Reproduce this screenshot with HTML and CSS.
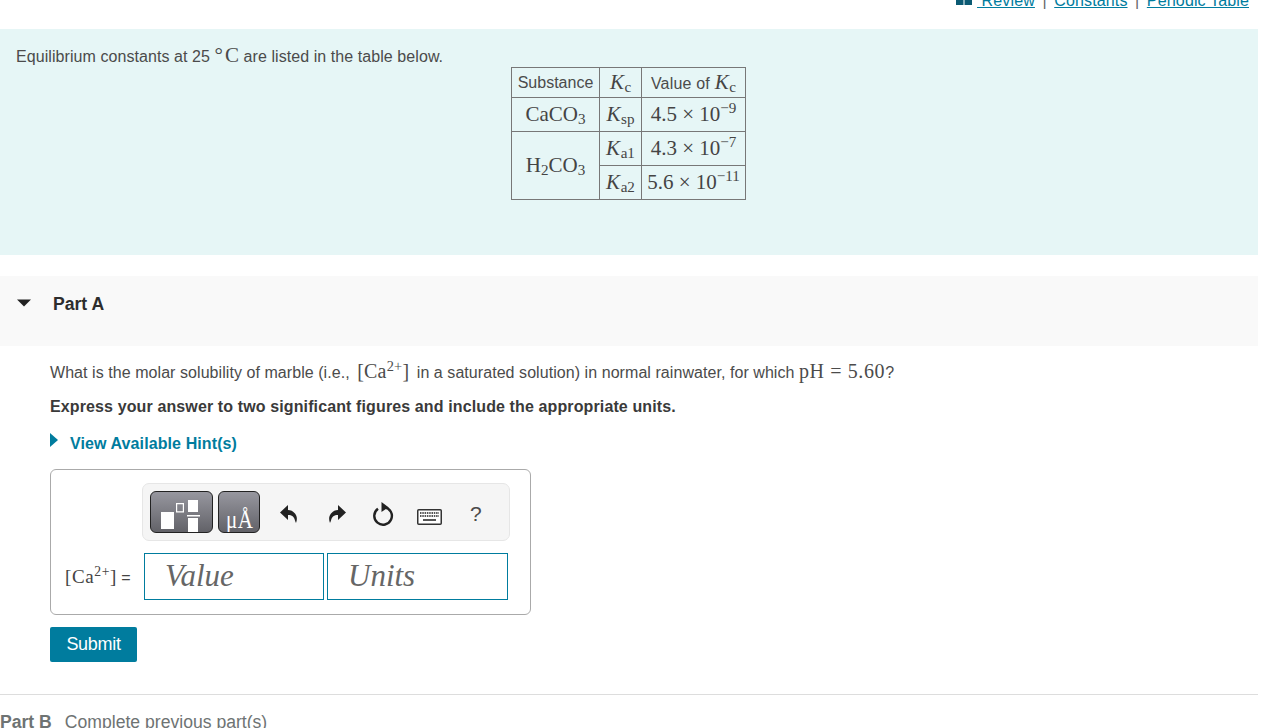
FILE: index.html
```html
<!DOCTYPE html>
<html lang="en">
<head>
<meta charset="utf-8">
<title>Part A</title>
<link rel="stylesheet" href="styles.css">
</head>
<body>
<main class="page">
  <nav class="toplinks">
    <svg class="book" width="16" height="7" viewBox="0 0 16 7"><path d="M0 0h7.500v5H0zM8.500 0H16v5H8.500z" fill="#0b5a73"/></svg>
    <a href="#" class="link">&nbsp;Review</a><span class="sep">|</span><a href="#" class="link">Constants</a><span class="sep">|</span><a href="#" class="link">Periodic Table</a>
  </nav>

  <section class="intro">
    <p class="intro-text">Equilibrium constants at 25 <span class="m"><span class="deg">°</span>C</span> are listed in the table below.</p>
    <table class="constants">
      <tr class="r1"><th class="c1">Substance</th><th class="c2"><span class="m"><i>K</i><sub>c</sub></span></th><th class="c3">Value of <span class="m"><i>K</i><sub>c</sub></span></th></tr>
      <tr class="r2"><td class="m">CaCO<sub>3</sub></td><td class="m"><i>K</i><sub>sp</sub></td><td class="m">4.5 × 10<sup>−9</sup></td></tr>
      <tr class="r2"><td class="m" rowspan="2">H<sub>2</sub>CO<sub>3</sub></td><td class="m"><i>K</i><sub>a1</sub></td><td class="m">4.3 × 10<sup>−7</sup></td></tr>
      <tr class="r2"><td class="m"><i>K</i><sub>a2</sub></td><td class="m">5.6 × 10<sup>−11</sup></td></tr>
    </table>
  </section>

  <header class="part-head">
    <svg class="caret" width="14" height="8" viewBox="0 0 14 8"><path d="M0 .5h14L7 7.500z" fill="#222"/></svg>
    <h2 class="part-title">Part A</h2>
  </header>

  <section class="part-body">
    <p class="question">What is the molar solubility of marble (i.e., <span class="m q-ion">[Ca<sup>2+</sup>]</span> in a saturated solution) in normal rainwater, for which <span class="m q-ph">pH = 5.60</span>?</p>
    <p class="instruction">Express your answer to two significant figures and include the appropriate units.</p>
    <a href="#" class="hint"><svg class="hint-caret" width="8" height="14" viewBox="0 0 8 14"><path d="M0 0l8 7-8 7z" fill="#007c9e"/></svg>View Available Hint(s)</a>

    <div class="answer">
      <div class="toolbar">
        <button class="tool wide" aria-label="Templates">
          <svg width="63" height="42" viewBox="0 0 63 42"><path d="M11 21h13v17H11z" fill="#fff"/><path d="M26.600 12.600h6.800v8.200h-6.800z" fill="none" stroke="#fff" stroke-width="1.200"/><path d="M38 9h10v12H38zM38 27h10v14H38z" fill="#fff"/><path d="M37 24h13v1.500H37z" fill="#fff"/></svg>
        </button>
        <button class="tool narrow" aria-label="Units">
          <span class="mu">μÅ</span>
        </button>
        <svg class="action a-undo" width="20" height="22" viewBox="0 0 20 22"><path d="M9 2L1 9.500l8 7.500v-5c4 0 6 1.500 7 5.500.3 1 .8 2 1 2.500 1.500-4 1-7-1-9.500C14 8 11.500 7 9 7z" fill="#222"/></svg>
        <svg class="action a-redo" width="20" height="22" viewBox="0 0 20 22"><path d="M11 2l8 7.500-8 7.500v-5c-4 0-6 1.500-7 5.500-.3 1-.8 2-1 2.500-1.500-4-1-7 1-9.500C6 8 8.500 7 11 7z" fill="#222"/></svg>
        <svg class="action a-reset" width="22" height="26" viewBox="0 0 22 26"><path d="M12.500 6.200A8.800 8.800 0 1 1 6 7.700" fill="none" stroke="#222" stroke-width="2.400"/><path d="M9.500 1l7 5.200-7 4.800z" fill="#222"/></svg>
        <svg class="action a-keys" width="25" height="16" viewBox="0 0 25 16"><rect x=".75" y=".75" width="23.500" height="14.500" rx="1" fill="#fff" stroke="#333" stroke-width="1.500"/><path d="M3 4h19M3 7h19" stroke="#555" stroke-width="2" stroke-dasharray="1.500 .8"/><path d="M6 11h13" stroke="#555" stroke-width="2"/></svg>
        <span class="help">?</span>
      </div>
      <div class="answer-row">
        <span class="label"><span class="m label-m">[Ca<sup>2+</sup>]</span> =</span>
        <input class="field value" type="text" placeholder="Value" aria-label="Value">
        <input class="field units" type="text" placeholder="Units" aria-label="Units">
      </div>
    </div>

    <button class="submit">Submit</button>
  </section>

  <footer class="part-b"><strong>Part B</strong><span class="pending">Complete previous part(s)</span></footer>
</main>
</body>
</html>
```
FILE: styles.css
```css
html, body { margin: 0; padding: 0; height: 728px; overflow: hidden; background: #fff; }
body { font-family: "Liberation Sans", Arial, sans-serif; font-size: 16px; color: #4b4b4b; }
p, h2 { margin: 0; }
.page { width: 1258px; }
.m { font-family: "Liberation Serif", "Times New Roman", serif; }
.m sub, .m sup { font-size: 72%; line-height: 0; }
.m sub { vertical-align: -.18em; }
.m sup { vertical-align: .5em; }

.toplinks { height: 29px; display: flex; justify-content: flex-end; align-items: flex-start; padding-right: 9px; box-sizing: border-box; line-height: 18px; margin-top: -8px; margin-bottom: 8px; letter-spacing: .14px; }
.book { margin-right: 5px; margin-top: 8px; }
.link { color: #007c9e; text-decoration: underline; }
.sep { color: #666; margin: 0 7.500px; }

.intro { height: 226px; background: #e6f6f6; box-sizing: border-box; padding-top: 18px; }
.intro-text { padding-left: 16px; line-height: 19px; letter-spacing: .07px; }
.intro-text .m { font-size: 21px; line-height: 0; }
.deg { margin-right: 2px; }
.constants { border-collapse: collapse; margin: 1px 0 0 511px; table-layout: fixed; width: 235px; }
.constants th, .constants td { border: 1px solid #777; padding: 0; text-align: center; font-weight: 400; white-space: nowrap; }
.constants .c1 { width: 87px; }
.constants .c2 { width: 41px; }
.constants .c3 { letter-spacing: .2px; }
.constants .r1 { height: 30px; }
.constants .r2 { height: 34px; }
.constants .m { font-size: 21px; color: #444; }
.constants th .m { font-size: 21px; }
.constants i { letter-spacing: .5px; }

.part-head { margin-top: 21px; height: 70px; background: #f9f9f9; display: flex; align-items: flex-start; padding-left: 17px; box-sizing: border-box; }
.caret { margin-top: 23px; }
.part-title { margin: 18px 0 0 22px; font-size: 17.6px; line-height: 20px; font-weight: 700; color: #2d2d2d; }

.part-body { padding-left: 50px; }
.question { padding-top: 12px; line-height: 26px; letter-spacing: .06px; }
.q-ion { font-size: 20px; margin: 0 3px; letter-spacing: .2px; }
.q-ph { font-size: 20px; letter-spacing: .6px; }
.instruction { margin-top: 11px; font-weight: 700; line-height: 20px; color: #3a3a3a; letter-spacing: .12px; }
.hint { display: flex; align-items: center; margin-top: 17px; height: 20px; font-weight: 700; color: #007c9e; text-decoration: none; letter-spacing: .1px; }
.hint-caret { margin: -8px 12px 0 0; }

.answer { margin-top: 15px; width: 481px; height: 146px; box-sizing: border-box; border: 1px solid #aaa; border-radius: 6px; padding: 13px 21px 0 14px; }
.toolbar { margin-left: 77px; height: 58px; width: 368px; box-sizing: border-box; background: #f5f5f5; border: 1px solid #e6e6e6; border-radius: 7px; display: flex; align-items: center; padding-left: 7px; position: relative; }
.tool { position: relative; height: 42px; padding: 0; border: 1px solid #222; border-radius: 6px; background: linear-gradient(#97979f, #626268); display: block; overflow: hidden; }
.tool svg { display: block; position: absolute; left: -1px; top: -1px; }
.wide { width: 63px; }
.narrow { width: 42px; margin-left: 5px; }
.mu { position: absolute; left: 7px; top: 17px; font-family: "Liberation Serif", serif; font-size: 21px; line-height: 24px; color: #fff; letter-spacing: .5px; transform: scaleY(1.2); transform-origin: 50% 85%; }
.action { flex: none; display: block; }
.a-undo { margin-left: 19px; margin-top: 3px; }
.a-redo { margin-left: 28px; margin-top: 3px; }
.a-reset { margin-left: 25px; margin-top: 4px; }
.a-keys { margin-left: 23px; margin-top: 9px; }
.help { margin-left: 28px; font-size: 21px; line-height: 24px; color: #4b4b4b; margin-top: 4px; }

.answer-row { display: flex; align-items: center; margin-top: 12px; }
.label { width: 79px; font-size: 16px; white-space: nowrap; color: #444; letter-spacing: -.2px; }
.label-m { font-size: 19px; letter-spacing: .6px; }
.field { box-sizing: border-box; height: 47px; border: 1px solid #007c9e; border-radius: 0; padding: 0 0 2px 20px; margin: 0; background: #fff; font-family: "Liberation Serif", serif; font-style: italic; font-size: 31px; }
.field::placeholder { color: #666; opacity: 1; }
.value { width: 180px; }
.units { width: 181px; margin-left: 3px; }

.submit { display: block; margin-top: 12px; width: 87px; height: 35px; border: 0; border-radius: 2px; background: #007c9e; color: #fff; padding: 0; font-family: "Liberation Sans", Arial, sans-serif; font-size: 18px; letter-spacing: -.3px; }

.part-b { margin-top: 32px; border-top: 1px solid #ddd; padding-top: 17px; line-height: 20px; font-size: 17.6px; color: #6e7373; white-space: nowrap; }
.part-b strong { color: #6e7373; }
.pending { margin-left: 13px; }
```
